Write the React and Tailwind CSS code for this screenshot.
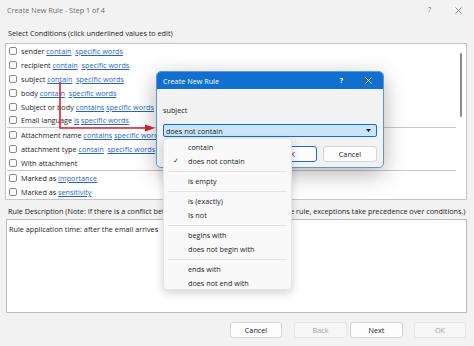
import React from 'react'

function Box() {
  return <span className="w-[8px] h-[8px] shrink-0 rounded-[2px] border border-[#8a8a8a] bg-white" />
}

function L({ children }) {
  return <span className="text-[#1f66c6] underline underline-offset-[1px]">{children}</span>
}

function Row({ children }) {
  return (
    <div className="flex items-center h-[14px] pl-[3px] gap-[4px]">
      <Box />
      <span className="whitespace-nowrap">{children}</span>
    </div>
  )
}

function Sep() {
  return <div className="h-px bg-[#c8c8c8] ml-px" />
}

function Item({ children, checked }) {
  return (
    <div className="flex items-center h-[14px]">
      <span className="w-[24px] pl-[9px] text-[7px] text-[#333]">{checked ? '✓' : ''}</span>
      <span className="whitespace-nowrap">{children}</span>
    </div>
  )
}

function MenuSep() {
  return (
    <div className="h-[6px] flex items-center px-[4px]">
      <div className="h-px w-full bg-[#e2e2e2]" />
    </div>
  )
}

function Btn({ children, disabled, className = '' }) {
  return (
    <div
      className={`h-[16px] flex items-center justify-center rounded-[3px] border ${
        disabled ? 'bg-[#f6f6f6] border-[#e6e6e6] text-[#a3a3a3]' : 'bg-[#fdfdfd] border-[#d4d4d4] text-[#1b1b1b]'
      } ${className}`}
    >
      {children}
    </div>
  )
}

export default function App() {
  return (
    <div className="relative w-[474px] h-[346px] overflow-hidden bg-[#f2f2f2] text-[#1b1b1b] text-[7.25px] leading-[10px] font-['Open_Sans',sans-serif]">
      {/* Title bar */}
      <div className="h-[20px] flex items-center pl-[7px] pr-[12px] text-[#6e6e6e]">
        <span className="flex-1">Create New Rule - Step 1 of 4</span>
        <span className="mr-[24px] text-[7px]">?</span>
        <svg width="7" height="7" viewBox="0 0 7 7" className="stroke-[#6e6e6e]">
          <path d="M0.5 0.5 L6.5 6.5 M6.5 0.5 L0.5 6.5" strokeWidth="0.8" />
        </svg>
      </div>

      <div className="mt-[8px] pl-[8px]">Select Conditions (click underlined values to edit)</div>

      {/* Conditions list */}
      <div className="mt-[5px] ml-[5px] mr-[7px] h-[157px] flex border border-[#c4c4c4] bg-white overflow-hidden">
        <div className="flex-1 flex flex-col">
          <Row>sender <L>contain</L>{'\u00a0 '}<L>specific words</L></Row>
          <Row>recipient <L>contain</L>{'\u00a0 '}<L>specific words</L></Row>
          <Row>subject <L>contain</L>{'\u00a0 '}<L>specific words</L></Row>
          <Row>body <L>contain</L>{'\u00a0 '}<L>specific words</L></Row>
          <Row>Subject or body <L>contains</L> <L>specific words</L></Row>
          <Row>Email language <L>is</L> <L>specific words</L></Row>
          <Sep />
          <Row>Attachment name <L>contains</L> <L>specific words</L></Row>
          <Row>attachment type <L>contain</L>{'\u00a0 '}<L>specific words</L></Row>
          <Row>With attachment</Row>
          <Sep />
          <Row>Marked as <L>importance</L></Row>
          <Row>Marked as <L>sensitivity</L></Row>
        </div>
        <div className="w-[10px] flex justify-center">
          <div className="mt-[9px] w-[2px] h-[64px] rounded-full bg-[#8a8a8a]" />
        </div>
      </div>

      <div className="mt-[6px] pl-[8px] whitespace-nowrap">
        Rule Description (Note: If there is a conflict between conditions and exceptions in the rule, exceptions take precedence over conditions.)
      </div>

      {/* Description box */}
      <div className="mt-[3px] ml-[6px] mr-[7px] h-[94px] border border-[#bdbdbd] bg-white pl-[2px] pt-[4px]">
        Rule application time: after the email arrives
      </div>

      {/* Footer buttons */}
      <div className="mt-[9px] flex justify-end pr-[8px]">
        <Btn className="w-[52px]">Cancel</Btn>
        <Btn disabled className="w-[53px] ml-[12px]">Back</Btn>
        <Btn className="w-[53px] ml-[3px]">Next</Btn>
        <Btn disabled className="w-[52px] ml-[11px]">OK</Btn>
      </div>

      {/* Red annotation arrow */}
      <svg className="absolute inset-0 pointer-events-none" width="474" height="346">
        <path d="M60 82 V128 H146" fill="none" stroke="#e3202a" strokeWidth="1.6" />
        <path d="M155 128 L145 124.5 L145 131.5 Z" fill="#e3202a" />
      </svg>

      {/* Inner dialog */}
      <div className="absolute left-[156px] top-[71px] w-[228px] h-[97px] flex flex-col rounded-[5px] border border-[#5a97d8] bg-[#f2f2f2] overflow-hidden shadow-[0_6px_22px_rgba(0,0,0,0.3)]">
        <div className="h-[17px] shrink-0 flex items-center pl-[6px] pr-[11px] bg-[#1170cf] text-white">
          <span className="flex-1">Create New Rule</span>
          <span className="mr-[22px] text-[7px] font-bold">?</span>
          <svg width="7" height="7" viewBox="0 0 7 7" className="stroke-white">
            <path d="M0.5 0.5 L6.5 6.5 M6.5 0.5 L0.5 6.5" strokeWidth="0.9" />
          </svg>
        </div>
        <div className="flex-1 px-[6px] pt-[16px]">
          <div>subject</div>
          <div className="mt-[9px] h-[13px] flex items-center pl-[2px] pr-[5px] rounded-[2px] border border-[#0a6fd1] bg-[#cce4f7]">
            <span className="flex-1">does not contain</span>
            <svg width="5" height="3" viewBox="0 0 5 3">
              <path d="M0 0 H5 L2.5 3 Z" fill="#1b1b1b" />
            </svg>
          </div>
          <div className="mt-[9px] flex justify-end gap-[6px]">
            <div className="w-[54px] h-[16px] flex items-center justify-center rounded-[3px] border border-[#1a6fce] bg-[#fdfdfd]">OK</div>
            <div className="w-[54px] h-[16px] flex items-center justify-center rounded-[3px] border border-[#d4d4d4] bg-[#fdfdfd]">Cancel</div>
          </div>
        </div>
      </div>

      {/* Dropdown menu */}
      <div className="absolute left-[163px] top-[138px] w-[129px] h-[152px] pt-px rounded-[4px] border border-[#e4e4e4] bg-[#f9f9f9] shadow-[0_3px_10px_rgba(0,0,0,0.18)]">
        <Item>contain</Item>
        <Item checked>does not contain</Item>
        <MenuSep />
        <Item>is empty</Item>
        <MenuSep />
        <Item>is (exactly)</Item>
        <Item>Is not</Item>
        <MenuSep />
        <Item>begins with</Item>
        <Item>does not begin with</Item>
        <MenuSep />
        <Item>ends with</Item>
        <Item>does not end with</Item>
      </div>
    </div>
  )
}
